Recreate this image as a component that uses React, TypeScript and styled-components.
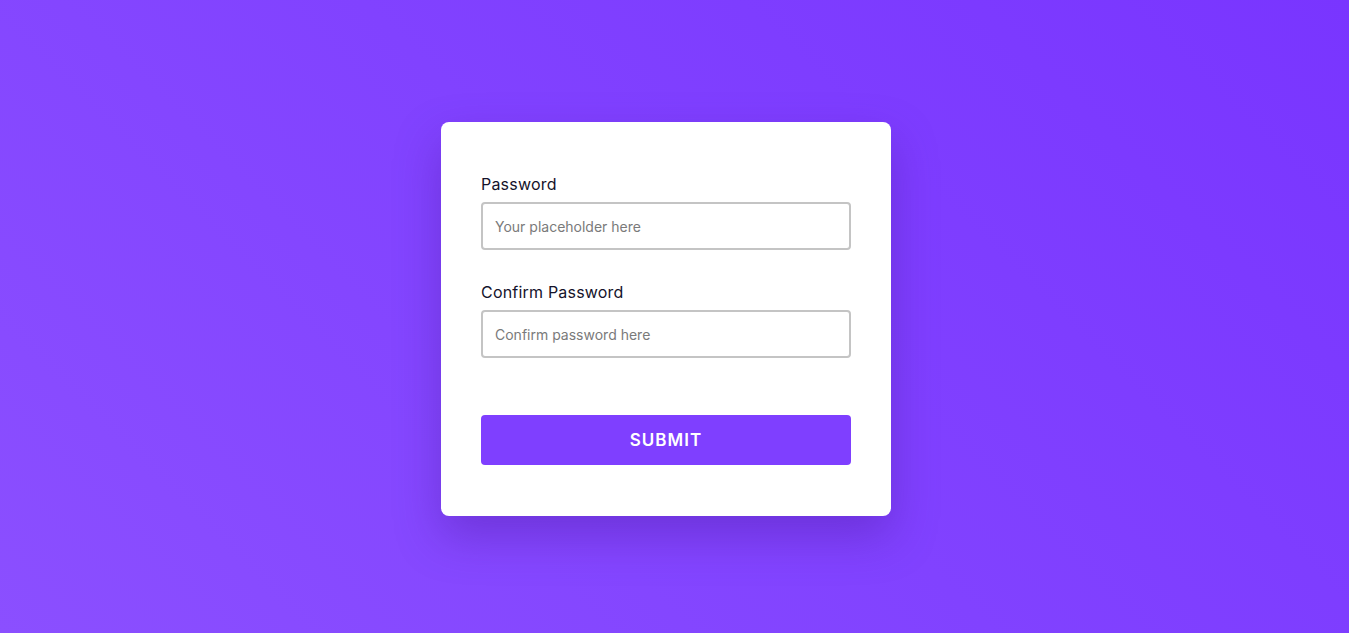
import React from "react";
import styled, { createGlobalStyle } from "styled-components";

const GlobalStyle = createGlobalStyle`
  html, body {
    margin: 0;
    padding: 0;
    height: 100%;
    overflow: hidden;
  }
  body {
    font-family: "Inter", "Open Sans", sans-serif;
  }
  * { box-sizing: border-box; }
`;

const Page = styled.div`
  width: 100%;
  height: 100vh;
  padding: 5px 17px 0 0;
  display: flex;
  align-items: center;
  justify-content: center;
  background: linear-gradient(45deg, #8b4fff 0%, #8142ff 50%, #7935ff 100%);
`;

const Card = styled.form`
  width: 450px;
  height: 394px;
  background: #ffffff;
  border-radius: 8px;
  padding: 50px 40px 50px;
  display: flex;
  flex-direction: column;
  box-shadow: 0 20px 45px rgba(70, 20, 150, 0.35);
`;

const Field = styled.div<{ $gap?: number }>`
  display: flex;
  flex-direction: column;
  margin-bottom: ${(p) => p.$gap ?? 0}px;
`;

const Label = styled.label`
  font-size: 16px;
  font-weight: 400;
  color: #15132b;
  line-height: 24px;
  margin-bottom: 6px;
  letter-spacing: 0.2px;
`;

const Input = styled.input`
  width: 370px;
  height: 48px;
  border: 2px solid #c4c4c4;
  border-radius: 4px;
  padding: 0 12px;
  font-family: inherit;
  font-size: 14px;
  color: #333;
  outline: none;
  &::placeholder {
    color: #7a7a7a;
  }
`;

const Button = styled.button`
  width: 370px;
  height: 50px;
  border: none;
  border-radius: 4px;
  background: #7f3fff;
  color: #ffffff;
  font-family: inherit;
  font-size: 17px;
  font-weight: 600;
  letter-spacing: 1px;
  cursor: pointer;
`;

export default function App() {
  return (
    <>
      <GlobalStyle />
      <Page>
        <Card onSubmit={(e) => e.preventDefault()}>
          <Field $gap={30}>
            <Label>Password</Label>
            <Input type="password" placeholder="Your placeholder here" />
          </Field>
          <Field $gap={57}>
            <Label>Confirm Password</Label>
            <Input type="password" placeholder="Confirm password here" />
          </Field>
          <Button type="submit">SUBMIT</Button>
        </Card>
      </Page>
    </>
  );
}
